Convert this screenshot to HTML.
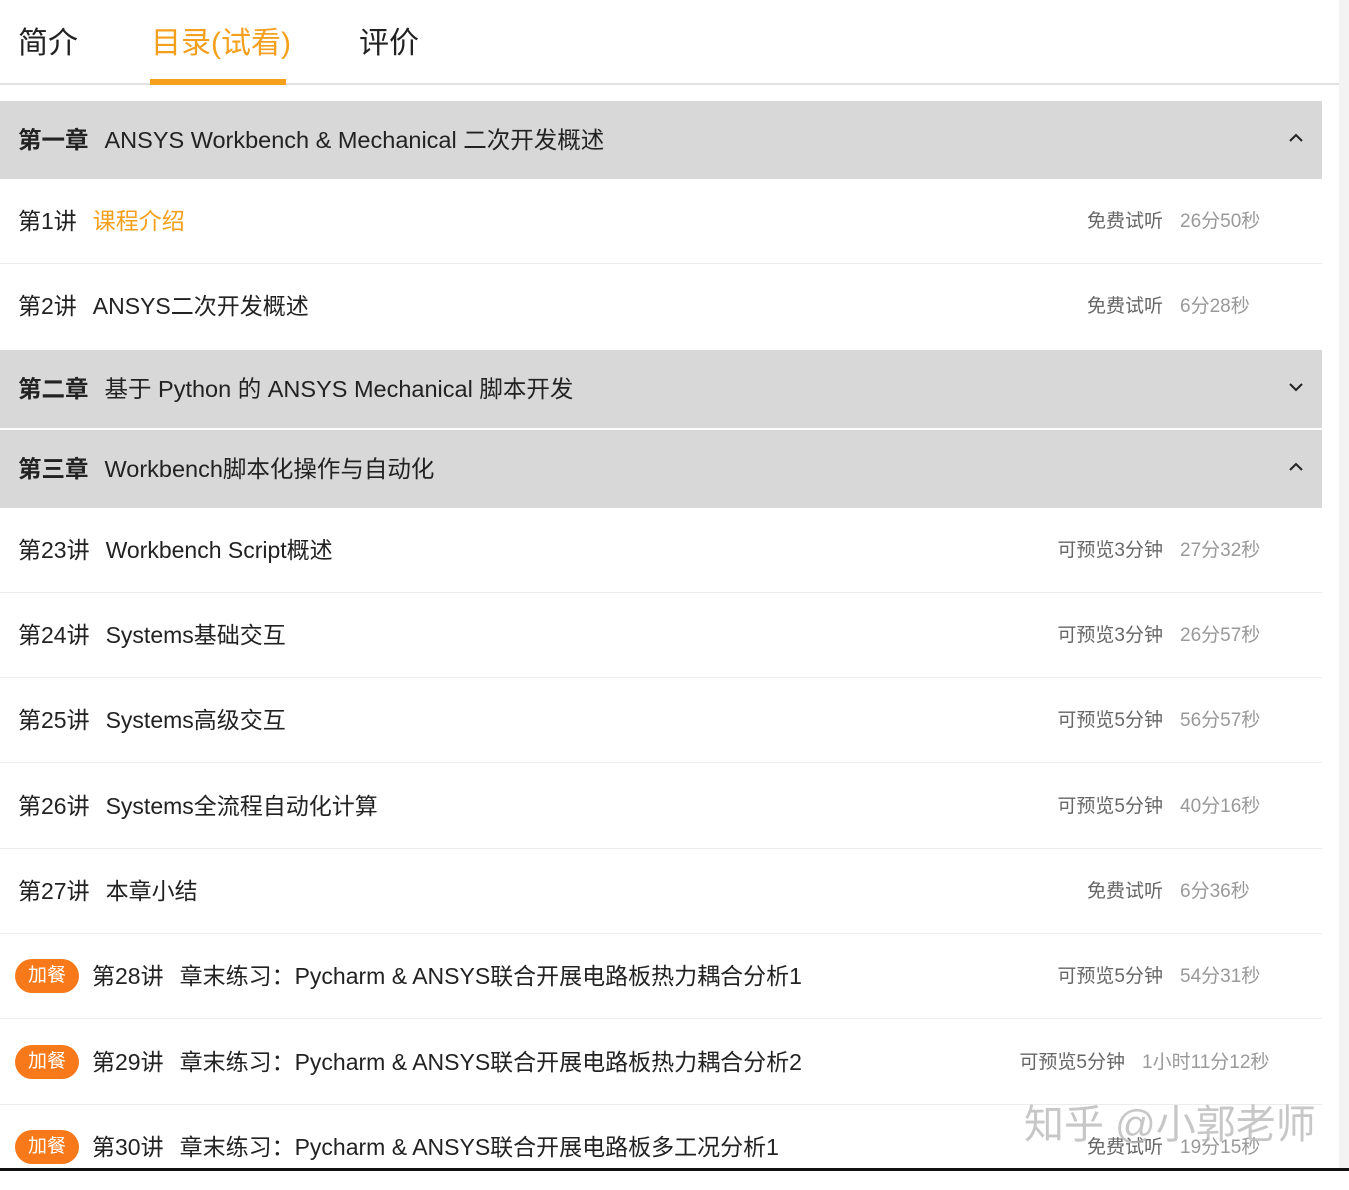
<!DOCTYPE html>
<html><head><meta charset="utf-8"><style>
*{margin:0;padding:0;box-sizing:border-box}
body{width:1349px;height:1171px;overflow:hidden;background:#fff;position:relative;font-family:"Liberation Sans","Noto Sans CJK SC",sans-serif;color:#222}
.sb{position:absolute;left:1339px;top:0;width:10px;height:1171px;background:#f3f3f3}
.tab{position:absolute;top:24px;font-size:30px;line-height:40px}
.ul{position:absolute;left:150px;top:79px;width:136px;height:6px;background:#f5a01c}
.hr{position:absolute;left:0;top:83px;width:1339px;height:2px;background:#e2e2e2}
.ch{position:absolute;left:0;width:1322px;height:78px;background:#d8d8d8;font-size:23.5px;line-height:78px;padding-left:18px}
.ch b{font-weight:bold;margin-right:16px}
.ch svg{position:absolute;left:1288px;top:32px}
.row{position:absolute;left:0;width:1322px;height:85px;border-bottom:1px solid #ececec;font-size:23px;line-height:85px;padding-left:18px}
.row .n{margin-right:16px}
.row .l{position:absolute;font-size:19px;color:#666;text-align:right;right:159px;top:0}
.row .d{position:absolute;font-size:19px;color:#999;left:1180px;top:0}
.bd{display:inline-block;width:64px;height:34px;line-height:34px;border-radius:17px;background:#f7791a;color:#fff;font-size:19px;text-align:center;vertical-align:middle;margin:-4px 13px 0 -3px}
.wm{position:absolute;left:1024px;top:1092px;font-size:40px;color:rgba(180,180,180,.75)}
.bot{position:absolute;left:0;top:1168px;width:1349px;height:3px;background:#111}
</style></head><body>
<div class="sb"></div>
<div class="tab" style="left:18px">简介</div>
<div class="tab" style="left:151px;color:#f5a01c">目录(试看)</div>
<div class="tab" style="left:359px">评价</div>
<div class="hr"></div><div class="ul"></div>

<div class="ch" style="top:101px"><b>第一章</b>ANSYS Workbench &amp; Mechanical 二次开发概述<svg width="16" height="10"><path d="M2 8L8 2L14 8" fill="none" stroke="#222" stroke-width="2"/></svg></div>
<div class="row" style="top:179px"><span class="n">第1讲</span><span style="color:#f5a01c">课程介绍</span><span class="l">免费试听</span><span class="d">26分50秒</span></div>
<div class="row" style="top:264px;border:none"><span class="n">第2讲</span>ANSYS二次开发概述<span class="l">免费试听</span><span class="d">6分28秒</span></div>
<div class="ch" style="top:350px"><b>第二章</b>基于 Python 的 ANSYS Mechanical 脚本开发<svg width="16" height="10"><path d="M2 2L8 8L14 2" fill="none" stroke="#222" stroke-width="2"/></svg></div>
<div class="ch" style="top:430px"><b>第三章</b>Workbench脚本化操作与自动化<svg width="16" height="10"><path d="M2 8L8 2L14 8" fill="none" stroke="#222" stroke-width="2"/></svg></div>
<div class="row" style="top:508px"><span class="n">第23讲</span>Workbench Script概述<span class="l">可预览3分钟</span><span class="d">27分32秒</span></div>
<div class="row" style="top:593px"><span class="n">第24讲</span>Systems基础交互<span class="l">可预览3分钟</span><span class="d">26分57秒</span></div>
<div class="row" style="top:678px"><span class="n">第25讲</span>Systems高级交互<span class="l">可预览5分钟</span><span class="d">56分57秒</span></div>
<div class="row" style="top:764px"><span class="n">第26讲</span>Systems全流程自动化计算<span class="l">可预览5分钟</span><span class="d">40分16秒</span></div>
<div class="row" style="top:849px"><span class="n">第27讲</span>本章小结<span class="l">免费试听</span><span class="d">6分36秒</span></div>
<div class="row" style="top:934px"><span class="bd">加餐</span><span class="n">第28讲</span>章末练习：Pycharm &amp; ANSYS联合开展电路板热力耦合分析1<span class="l">可预览5分钟</span><span class="d">54分31秒</span></div>
<div class="row" style="top:1020px"><span class="bd">加餐</span><span class="n">第29讲</span>章末练习：Pycharm &amp; ANSYS联合开展电路板热力耦合分析2<span class="l" style="right:197px">可预览5分钟</span><span class="d" style="left:1142px">1小时11分12秒</span></div>
<div class="row" style="top:1105px;border:none"><span class="bd">加餐</span><span class="n">第30讲</span>章末练习：Pycharm &amp; ANSYS联合开展电路板多工况分析1<span class="l">免费试听</span><span class="d">19分15秒</span></div>
<div class="wm">知乎 @小郭老师</div>
<div class="bot"></div>
</body></html>
